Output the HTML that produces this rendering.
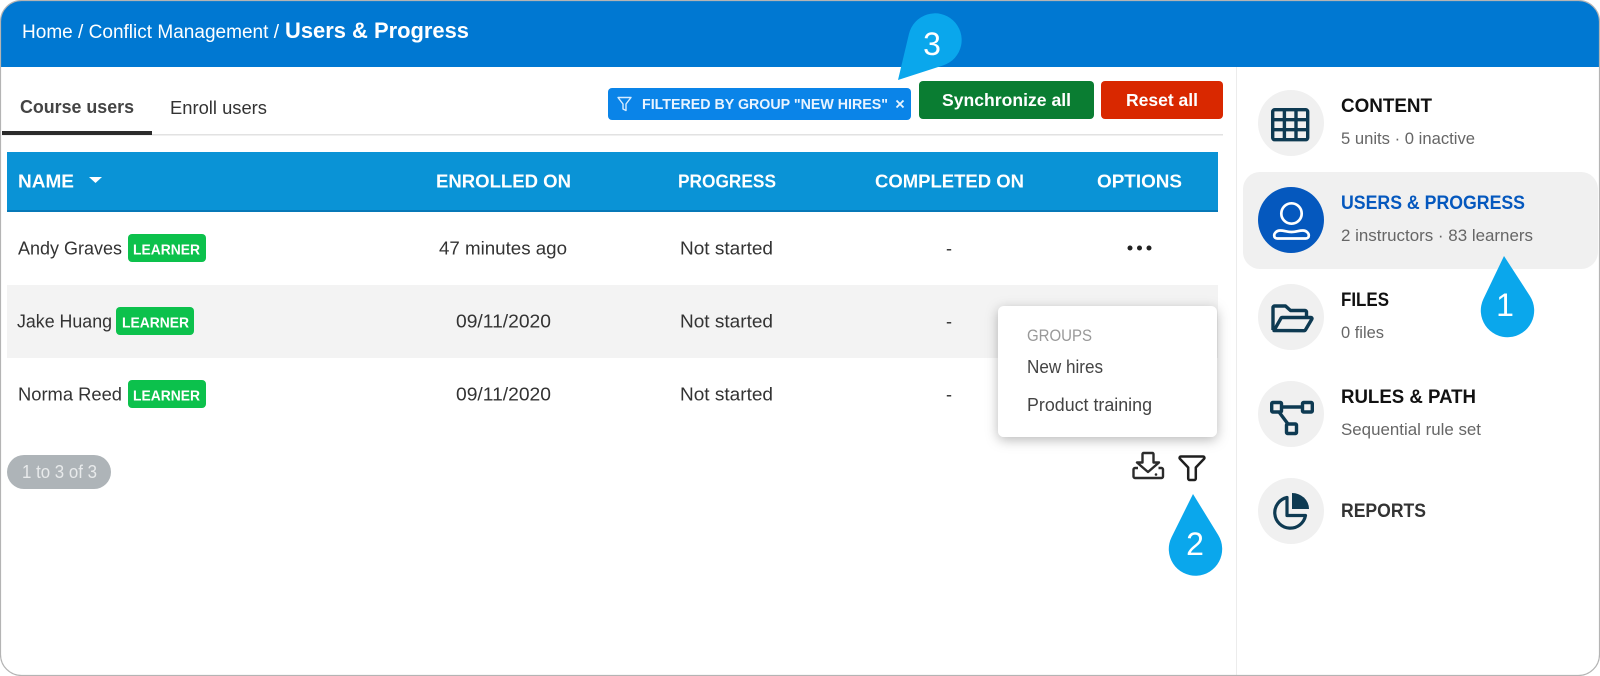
<!DOCTYPE html>
<html lang="en">
<head>
<meta charset="utf-8">
<title>Users &amp; Progress</title>
<style>
html,body{margin:0;padding:0;background:#fff;width:1600px;height:676px;overflow:hidden}
svg{display:block}
text{font-family:"Liberation Sans",Arial,sans-serif;white-space:pre}
.b{font-weight:700}
</style>
</head>
<body>
<svg width="1600" height="676" viewBox="0 0 1600 676" xmlns="http://www.w3.org/2000/svg">
<defs>
<clipPath id="frame"><rect x="0.5" y="0.5" width="1599" height="675" rx="21"/></clipPath>
<filter id="sh" x="-20%" y="-20%" width="140%" height="150%"><feDropShadow dx="0" dy="3" stdDeviation="6" flood-color="#000" flood-opacity=".28"/></filter>
</defs>
<g clip-path="url(#frame)">
<rect width="1600" height="676" fill="#fff"/>
<rect width="1600" height="67" fill="#0078d2"/>
<rect x="1236" y="67" width="1" height="609" fill="#ececec"/>
<rect x="2" y="134" width="1221" height="1.5" fill="#e2e2e2"/>
<rect x="2" y="131" width="150" height="4" fill="#2b2b2b"/>
<rect x="7" y="152" width="1211" height="59" fill="#0a93d6"/>
<rect x="7" y="210" width="1211" height="2" fill="#0779b8"/>
<rect x="7" y="285" width="1211" height="73" fill="#f3f3f3"/>
</g>

<!-- header -->
<text x="22" y="38" font-size="19" fill="#fff" textLength="257" lengthAdjust="spacingAndGlyphs">Home / Conflict Management /</text>
<text x="285" y="38" font-size="22" class="b" fill="#fff" textLength="184" lengthAdjust="spacingAndGlyphs">Users &amp; Progress</text>

<!-- tabs -->
<text x="20" y="113" font-size="18" class="b" fill="#444" textLength="114" lengthAdjust="spacingAndGlyphs">Course users</text>
<text x="170" y="114" font-size="18" fill="#333" textLength="97" lengthAdjust="spacingAndGlyphs">Enroll users</text>

<!-- chip + buttons -->
<rect x="608" y="88" width="303" height="32" rx="4" fill="#0a84e8"/>
<path d="M618 97.500h13l-5 6.500v6.500l-3-1.500v-5z" fill="none" stroke="#d6ecff" stroke-width="1.400" stroke-linejoin="round"/>
<text x="642" y="109" font-size="14.500" class="b" fill="#e9f4ff" textLength="246" lengthAdjust="spacingAndGlyphs">FILTERED BY GROUP "NEW HIRES"</text>
<path d="M896.500 100.500l7 7m0-7l-7 7" stroke="#e9f4ff" stroke-width="1.800" fill="none"/>
<rect x="919" y="81" width="175" height="38" rx="4" fill="#0a7d32"/>
<text x="942" y="106" font-size="17.500" class="b" fill="#fff" textLength="129" lengthAdjust="spacingAndGlyphs">Synchronize all</text>
<rect x="1101" y="81" width="122" height="38" rx="4" fill="#d92800"/>
<text x="1126" y="106" font-size="17.500" class="b" fill="#fff" textLength="72" lengthAdjust="spacingAndGlyphs">Reset all</text>

<!-- table header -->
<text x="18" y="187.500" font-size="18.500" class="b" fill="#fff" textLength="56" lengthAdjust="spacingAndGlyphs">NAME</text>
<path d="M89 177h13l-6.500 6z" fill="#fff"/>
<text x="436" y="187.500" font-size="18.500" class="b" fill="#fff" textLength="135" lengthAdjust="spacingAndGlyphs">ENROLLED ON</text>
<text x="678" y="187.500" font-size="18.500" class="b" fill="#fff" textLength="98" lengthAdjust="spacingAndGlyphs">PROGRESS</text>
<text x="875" y="187.500" font-size="18.500" class="b" fill="#fff" textLength="149" lengthAdjust="spacingAndGlyphs">COMPLETED ON</text>
<text x="1097" y="187.500" font-size="18.500" class="b" fill="#fff" textLength="85" lengthAdjust="spacingAndGlyphs">OPTIONS</text>

<!-- row 1 -->
<text x="18" y="254.500" font-size="18" fill="#333" textLength="104" lengthAdjust="spacingAndGlyphs">Andy Graves</text>
<rect x="128" y="234" width="78" height="28" rx="4" fill="#0cc14c"/>
<text x="133" y="254.500" font-size="15" class="b" fill="#fff" textLength="67" lengthAdjust="spacingAndGlyphs">LEARNER</text>
<text x="439" y="254.500" font-size="18" fill="#333" textLength="128" lengthAdjust="spacingAndGlyphs">47 minutes ago</text>
<text x="680" y="254.500" font-size="18" fill="#333" textLength="93" lengthAdjust="spacingAndGlyphs">Not started</text>
<text x="946" y="254.500" font-size="18" fill="#333">-</text>
<g fill="#222"><circle cx="1130" cy="248" r="2.500"/><circle cx="1139.500" cy="248" r="2.500"/><circle cx="1149" cy="248" r="2.500"/></g>

<!-- row 2 -->
<text x="17" y="327.500" font-size="18" fill="#333" textLength="95" lengthAdjust="spacingAndGlyphs">Jake Huang</text>
<rect x="116" y="307" width="78" height="28" rx="4" fill="#0cc14c"/>
<text x="122" y="327.500" font-size="15" class="b" fill="#fff" textLength="67" lengthAdjust="spacingAndGlyphs">LEARNER</text>
<text x="456" y="327.500" font-size="18" fill="#333" textLength="95" lengthAdjust="spacingAndGlyphs">09/11/2020</text>
<text x="680" y="327.500" font-size="18" fill="#333" textLength="93" lengthAdjust="spacingAndGlyphs">Not started</text>
<text x="946" y="327.500" font-size="18" fill="#333">-</text>

<!-- row 3 -->
<text x="18" y="400.500" font-size="18" fill="#333" textLength="104" lengthAdjust="spacingAndGlyphs">Norma Reed</text>
<rect x="128" y="380" width="78" height="28" rx="4" fill="#0cc14c"/>
<text x="133" y="400.500" font-size="15" class="b" fill="#fff" textLength="67" lengthAdjust="spacingAndGlyphs">LEARNER</text>
<text x="456" y="400.500" font-size="18" fill="#333" textLength="95" lengthAdjust="spacingAndGlyphs">09/11/2020</text>
<text x="680" y="400.500" font-size="18" fill="#333" textLength="93" lengthAdjust="spacingAndGlyphs">Not started</text>
<text x="946" y="400.500" font-size="18" fill="#333">-</text>

<!-- pager -->
<rect x="7" y="455" width="104" height="34" rx="17" fill="#aeb4b8"/>
<text x="22" y="478" font-size="18" fill="#e8eaeb" textLength="75" lengthAdjust="spacingAndGlyphs">1 to 3 of 3</text>

<!-- popup -->
<rect x="998" y="306" width="219" height="131" rx="6" fill="#fff" filter="url(#sh)"/>
<text x="1027" y="341" font-size="16.500" fill="#999" textLength="65" lengthAdjust="spacingAndGlyphs">GROUPS</text>
<text x="1027" y="373" font-size="18" fill="#444" textLength="76" lengthAdjust="spacingAndGlyphs">New hires</text>
<text x="1027" y="411" font-size="18" fill="#444" textLength="125" lengthAdjust="spacingAndGlyphs">Product training</text>

<!-- download + filter icons -->
<path d="M1142.500 462.500v-8.500a1 1 0 0 1 1-1h9a1 1 0 0 1 1 1v8.500h5.500l-11 9.500-11-9.500z" fill="none" stroke="#2b2b2b" stroke-width="2.400" stroke-linejoin="round"/>
<path d="M1138 468h-3a1.500 1.500 0 0 0-1.500 1.500v7a1.500 1.500 0 0 0 1.500 1.500h26.500a1.500 1.500 0 0 0 1.500-1.500v-7a1.500 1.500 0 0 0-1.500-1.500h-3" fill="none" stroke="#2b2b2b" stroke-width="2.400"/>
<circle cx="1156" cy="474.500" r="1.300" fill="#2b2b2b"/>
<path d="M1181 456.500h22a1.400 1.400 0 0 1 1 2.400l-8.200 8.600v11a1.500 1.500 0 0 1-1.500 1.500h-4.600a1.500 1.500 0 0 1-1.500-1.500v-11l-8.200-8.600a1.400 1.400 0 0 1 1-2.400z" fill="none" stroke="#1f1f1f" stroke-width="2.500" stroke-linejoin="round"/>

<!-- sidebar -->
<rect x="1243" y="172" width="355" height="97" rx="17" fill="#f0f0f0"/>
<circle cx="1291" cy="123" r="33" fill="#f0f0f0"/>
<circle cx="1291" cy="220" r="33" fill="#0558be"/>
<circle cx="1291" cy="317" r="33" fill="#f0f0f0"/>
<circle cx="1291" cy="414" r="33" fill="#f0f0f0"/>
<circle cx="1291" cy="511" r="33" fill="#f0f0f0"/>

<!-- content icon -->
<g fill="none" stroke="#0e3a52" stroke-width="3.400">
<rect x="1272.700" y="109.700" width="35" height="30" rx="2"/>
<path d="M1284.400 109.700v30M1296 109.700v30M1272.700 119.700h35M1272.700 129.700h35"/>
</g>
<!-- user icon -->
<g fill="none" stroke="#fff" stroke-width="2.700">
<circle cx="1291.500" cy="213.500" r="10.200"/>
<path d="M1280 230.500c4 0 7 1.500 11.500 1.500s7.500-1.500 11.500-1.500c3.500 0 5.800 2.800 5.800 5 0 1.900-1.200 3-3 3h-28.600c-1.800 0-3-1.100-3-3 0-2.200 2.300-5 5.800-5z"/>
</g>
<!-- folder icon -->
<g fill="none" stroke="#0e3a52" stroke-width="3.400" stroke-linejoin="round">
<path d="M1273 330v-22.500a1.500 1.500 0 0 1 1.500-1.500h11l5 4.500h14.500a1.500 1.500 0 0 1 1.500 1.500v4.500"/>
<path d="M1274 330.500l7-12.300a1.500 1.500 0 0 1 1.300-.7h28.700a1 1 0 0 1 .9 1.500l-6.500 11a1.500 1.500 0 0 1-1.300.7z"/>
</g>
<!-- rules icon -->
<g fill="none" stroke="#0e3a52" stroke-width="3.400">
<rect x="1271.700" y="402.500" width="9.800" height="9.500" rx="1"/>
<rect x="1302.500" y="402.500" width="9.800" height="9.500" rx="1"/>
<rect x="1286.500" y="424" width="10" height="9.500" rx="1"/>
<path d="M1281.500 407h21M1279 412l9 12"/>
</g>
<!-- reports icon -->
<path d="M1287 497.500a15.500 15.500 0 1 0 18.500 18h-18.500z" fill="none" stroke="#0e3a52" stroke-width="3.200" stroke-linejoin="round"/>
<path d="M1292 493a17 16 0 0 1 17 16h-17z" fill="#0e3a52"/>

<!-- sidebar text -->
<text x="1341" y="112" font-size="19" class="b" fill="#111" textLength="91" lengthAdjust="spacingAndGlyphs">CONTENT</text>
<text x="1341" y="144" font-size="16.500" fill="#666" textLength="134" lengthAdjust="spacingAndGlyphs">5 units · 0 inactive</text>
<text x="1341" y="209" font-size="19" class="b" fill="#0558be" textLength="184" lengthAdjust="spacingAndGlyphs">USERS &amp; PROGRESS</text>
<text x="1341" y="241" font-size="16.500" fill="#666" textLength="192" lengthAdjust="spacingAndGlyphs">2 instructors · 83 learners</text>
<text x="1341" y="306" font-size="19" class="b" fill="#111" textLength="48" lengthAdjust="spacingAndGlyphs">FILES</text>
<text x="1341" y="338" font-size="16.500" fill="#666" textLength="43" lengthAdjust="spacingAndGlyphs">0 files</text>
<text x="1341" y="403" font-size="19" class="b" fill="#111" textLength="135" lengthAdjust="spacingAndGlyphs">RULES &amp; PATH</text>
<text x="1341" y="435" font-size="16.500" fill="#666" textLength="140" lengthAdjust="spacingAndGlyphs">Sequential rule set</text>
<text x="1341" y="517" font-size="19" class="b" fill="#333" textLength="85" lengthAdjust="spacingAndGlyphs">REPORTS</text>

<!-- callout pins -->
<path d="M1504 256L1529.900 296A26.700 26.700 0 1 1 1483.400 299z" fill="#0aa7ec"/>
<text x="1505" y="316" font-size="32" fill="#fff" text-anchor="middle">1</text>
<path d="M1193 494L1218.200 535A26.700 26.700 0 1 1 1171.600 537.100z" fill="#0aa7ec"/>
<text x="1195" y="555" font-size="32" fill="#fff" text-anchor="middle">2</text>
<path d="M898 80L909 33.800A26.700 26.700 0 1 1 943.200 65.400z" fill="#0aa7ec"/>
<text x="932" y="55" font-size="32" fill="#fff" text-anchor="middle">3</text>

<!-- frame border -->
<rect x="0.500" y="0.500" width="1599" height="675" rx="21" fill="none" stroke="#b4b4b4" stroke-width="1.200"/>
</svg>
</body>
</html>
